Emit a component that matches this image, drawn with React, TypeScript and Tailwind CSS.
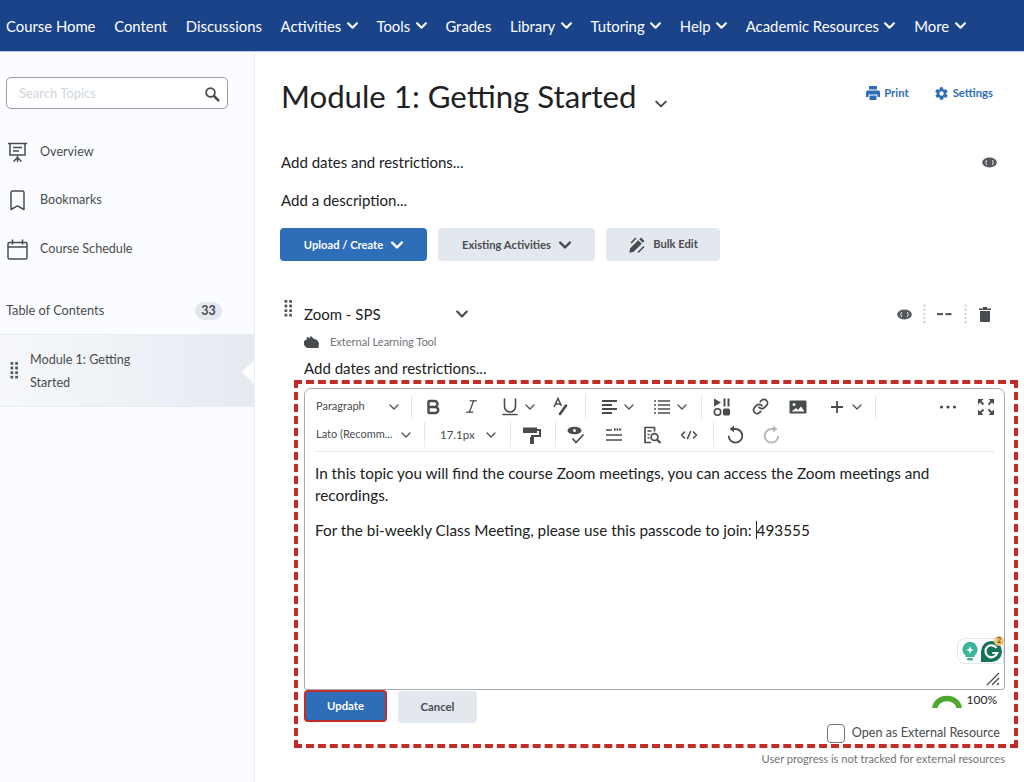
import { Bold, Italic, Link } from "lucide-react";

const navItems = [
  { label: "Course Home" },
  { label: "Content" },
  { label: "Discussions" },
  { label: "Activities", menu: true },
  { label: "Tools", menu: true },
  { label: "Grades" },
  { label: "Library", menu: true },
  { label: "Tutoring", menu: true },
  { label: "Help", menu: true },
  { label: "Academic Resources", menu: true },
  { label: "More", menu: true },
];

const Chevron = ({ className = "", size = 10, stroke = 1.2 }: { className?: string; size?: number; stroke?: number }) => (
  <svg width={size} height={size} viewBox="0 0 10 10" fill="none" stroke="currentColor" strokeWidth={stroke} strokeLinecap="round" strokeLinejoin="round" className={`shrink-0 ${className}`}>
    <path d="M1 3l4 4 4-4" />
  </svg>
);

const Dots = ({ className = "" }: { className?: string }) => (
  <svg width="9" height="17" viewBox="0 0 9 17" fill="#55585c" className={className}>
    {[0, 4.6, 9.2, 13.8].map((y) => (
      <g key={y}>
        <rect x="0.5" y={y} width="2.8" height="2.8" rx="0.6" />
        <rect x="5.2" y={y} width="2.8" height="2.8" rx="0.6" />
      </g>
    ))}
  </svg>
);

const Eye = ({ className = "" }: { className?: string }) => (
  <svg width="15" height="11" viewBox="0 0 15 11" className={className}>
    <ellipse cx="7.5" cy="5.5" rx="7.3" ry="5" fill="#55585c" />
    <path d="M4.6 3.2c-.9 1.4-.9 3.2 0 4.6M10.4 3.2c.9 1.4.9 3.2 0 4.6" stroke="#fff" strokeWidth="1" fill="none" />
  </svg>
);

const Sep = ({ className = "" }: { className?: string }) => <div className={`h-[25px] w-px shrink-0 bg-[#e3e8ef] ${className}`} />;

const Ic = ({ className = "", children }: { className?: string; children: React.ReactNode }) => (
  <svg width="20" height="20" viewBox="0 0 20 20" fill="none" className={`shrink-0 text-[#494c4e] ${className}`}>
    {children}
  </svg>
);

const VDots = () => (
  <svg width="3" height="20" viewBox="0 0 3 20" fill="#cdd5dc" className="shrink-0">
    {[1.5, 5.7, 9.9, 14.1, 18.3].map((y) => (
      <circle key={y} cx="1.5" cy={y} r="1.2" />
    ))}
  </svg>
);

const Sidebar = () => (
  <aside className="w-[255px] shrink-0 border-r border-[#e9edf3] bg-[#fbfcff] pt-[25px]">
    <div className="ml-[6px] flex h-[32px] w-[222px] items-center justify-between rounded-[5px] border border-[#9a9da1] bg-white pl-[12px] pr-[7px]">
      <span className="pt-[1px] text-[13px] text-[#cfd5dc]">Search Topics</span>
      <svg width="16" height="16" viewBox="0 0 16 16" fill="none" stroke="#494c4e" className="mt-[1px]">
        <circle cx="6.5" cy="6.5" r="4.4" strokeWidth="1.7" />
        <path d="M10 10l4.3 4.3" strokeWidth="2.6" strokeLinecap="round" />
      </svg>
    </div>

    <div className="mt-[19px] flex h-[48px] items-center text-[12.6px] text-[#494c4e]">
      <div className="flex w-[40px] justify-center pr-[6px]">
        <svg width="21" height="21" viewBox="0 0 21 21" fill="none" stroke="#494c4e" strokeWidth="1.5">
          <path d="M1 1.5h19M3 1.5v11.5h15V1.500M6 5.500h9M6 9h6" />
          <path d="M10.500 13v7M10.500 15.500l-4 4M10.500 15.500l4 4" />
        </svg>
      </div>
      Overview
    </div>
    <div className="flex h-[49px] items-center text-[12.6px] text-[#494c4e]">
      <div className="flex w-[40px] justify-center pr-[6px]">
        <svg width="15" height="21" viewBox="0 0 15 21" fill="none" stroke="#494c4e" strokeWidth="1.5" strokeLinejoin="round">
          <path d="M2.500 1h10a1.500 1.500 0 011.500 1.500V19.500l-6.500-3.600L1 19.500V2.500A1.500 1.500 0 012.500 1z" />
        </svg>
      </div>
      Bookmarks
    </div>
    <div className="flex h-[48px] items-center text-[12.6px] text-[#494c4e]">
      <div className="flex w-[40px] justify-center pr-[6px]">
        <svg width="21" height="21" viewBox="0 0 21 21" fill="none" stroke="#494c4e" strokeWidth="1.5">
          <rect x="1" y="3.5" width="19" height="16.5" rx="1.5" />
          <path d="M1 8h19M5.500 0.500v5M15.500 0.500v5" />
        </svg>
      </div>
      Course Schedule
    </div>

    <div className="mt-[26px] flex h-[24px] items-center justify-between pl-[6px] pr-[32px] text-[12.75px] text-[#494c4e]">
      Table of Contents
      <span className="flex h-[18px] w-[27px] items-center justify-center rounded-full bg-[#e3e8ef] text-[12.5px] font-bold">33</span>
    </div>

    <div className="relative mt-[11px] flex h-[73px] items-center border-y border-[#e9edf3] bg-gradient-to-r from-[#f6f8fb] to-[#e6eaf1] text-[12.6px] leading-[23px] text-[#494c4e]">
      <Dots className="ml-[10px] shrink-0" />
      <div className="ml-[11px] w-[120px]">Module 1: Getting Started</div>
      <div className="absolute right-0 top-[25px] h-0 w-0 border-y-[12px] border-r-[12px] border-y-transparent border-r-white" />
    </div>
  </aside>
);

const ToolbarRows = () => (
  <div className="mx-[10px] border-b border-[#e3e8ef] pb-[3px] pt-[4px] text-[#494c4e]">
    <div className="flex h-[27px] items-center pl-[1px]">
      <div className="flex w-[83px] items-center justify-between text-[11px]">
        Paragraph
        <Chevron />
      </div>
      <Sep className="ml-[12px]" />
      <div className="ml-[11px] flex w-[20px] shrink-0 justify-center">
        <Bold size={18} strokeWidth={3.2} />
      </div>
      <div className="ml-[18px] flex w-[20px] shrink-0 justify-center">
        <Italic size={17} strokeWidth={1.8} />
      </div>
      <Ic className="ml-[19px]">
        <path d="M4.500 2v7.500a5.500 5.500 0 0011 0V2M3 17.500h14" stroke="#494c4e" strokeWidth="1.600" strokeLinecap="round" />
      </Ic>
      <Chevron className="ml-[5px]" />
      <Ic className="ml-[17px]">
        <path d="M2 10L6 1.500 9.500 9M3.500 7h5" stroke="#494c4e" strokeWidth="1.500" />
        <path d="M8 17l6-8.500" stroke="#494c4e" strokeWidth="2.600" strokeLinecap="round" />
      </Ic>
      <Sep className="ml-[13px]" />
      <Ic className="ml-[14px]">
        <path d="M2 4h15M2 8h10M2 12h15M2 16h10" stroke="#494c4e" strokeWidth="1.800" />
      </Ic>
      <Chevron className="ml-[4px]" />
      <Ic className="ml-[18px]">
        <path d="M6 4h12M6 8h12M6 12h12M6 16h12" stroke="#494c4e" strokeWidth="1.600" />
        <path d="M2 4h2M2 8h2M2 12h2M2 16h2" stroke="#494c4e" strokeWidth="1.600" />
      </Ic>
      <Chevron className="ml-[5px]" />
      <Sep className="ml-[14px]" />
      <Ic className="ml-[10px]">
        <path d="M2 1.500l7 4-7 4z" fill="#494c4e" />
        <path d="M12.500 1.500v8M16.500 1.500v8" stroke="#494c4e" strokeWidth="2" />
        <circle cx="5.500" cy="15" r="3.200" stroke="#494c4e" strokeWidth="1.600" />
        <rect x="11" y="11.500" width="7" height="7" rx="1.500" fill="#494c4e" />
      </Ic>
      <div className="ml-[18px] flex w-[20px] shrink-0 justify-center">
        <Link size={17} strokeWidth={2.4} />
      </div>
      <Ic className="ml-[18px]">
        <path fillRule="evenodd" clipRule="evenodd" d="M2.500 3.500h15a1 1 0 011 1v11a1 1 0 01-1 1h-15a1 1 0 01-1-1v-11a1 1 0 011-1zM3.500 14.500h13l-3.500-5-3 3.500-2-2z M6 6a1.500 1.500 0 100 3 1.500 1.500 0 000-3z" fill="#494c4e" />
      </Ic>
      <Ic className="ml-[19px]">
        <path d="M10 4v12M4 10h12" stroke="#494c4e" strokeWidth="1.800" />
      </Ic>
      <Chevron className="ml-[5px]" />
      <Sep className="ml-[13px]" />
      <Ic className="ml-auto">
        <circle cx="3.500" cy="10" r="1.600" fill="#494c4e" />
        <circle cx="10" cy="10" r="1.600" fill="#494c4e" />
        <circle cx="16.500" cy="10" r="1.600" fill="#494c4e" />
      </Ic>
      <Ic className="ml-[18px] -mr-[2px]">
        <path d="M2 2h5.500L2 7.500zM18 2h-5.500L18 7.500zM2 18h5.500L2 12.500zM18 18h-5.500l5.500-5.500z" fill="#494c4e" />
        <path d="M4 4l3.500 3.500M16 4l-3.500 3.500M4 16l3.500-3.500M16 16l-3.500-3.500" stroke="#494c4e" strokeWidth="1.800" />
      </Ic>
    </div>
    <div className="mt-[1px] flex h-[27px] items-center pl-[1px]">
      <div className="flex w-[95px] items-center justify-between text-[11px]">
        Lato (Recomm...
        <Chevron />
      </div>
      <Sep className="ml-[13px]" />
      <span className="ml-[15px] w-[33px] text-[11.5px]">17.1px</span>
      <Chevron className="ml-[13px]" />
      <Sep className="ml-[14px]" />
      <Ic className="ml-[10px]">
        <path d="M2 2.500h14v5.500H2z" fill="#494c4e" />
        <path d="M16 5h3v6h-8v7" stroke="#494c4e" strokeWidth="2" />
        <rect x="9" y="12" width="4" height="7" fill="#494c4e" />
      </Ic>
      <Sep className="ml-[14px]" />
      <Ic className="ml-[10px]">
        <ellipse cx="8.500" cy="5.500" rx="7" ry="3.800" fill="#494c4e" />
        <circle cx="8.500" cy="5.500" r="1.500" fill="#fff" />
        <path d="M6.500 13.500l3.500 4 7.500-8" stroke="#494c4e" strokeWidth="1.700" />
      </Ic>
      <Ic className="ml-[18px]">
        <path d="M2 10h16M2 15h16M2 5h6" stroke="#494c4e" strokeWidth="1.600" />
        <path d="M10 4.500h8" stroke="#494c4e" strokeWidth="2.400" strokeDasharray="1.600 1" />
      </Ic>
      <Ic className="ml-[18px]">
        <path d="M9 17.500H3V2.500h9.500v4" stroke="#494c4e" strokeWidth="1.700" />
        <path d="M5.500 6h4M5.500 9.500h2M5.500 13h2" stroke="#494c4e" strokeWidth="1.400" />
        <circle cx="12.500" cy="12" r="3.400" stroke="#494c4e" strokeWidth="1.700" />
        <path d="M15 14.500l3.500 3.500" stroke="#494c4e" strokeWidth="2.200" />
      </Ic>
      <Ic className="ml-[17px]">
        <path d="M5.500 7L2.500 10l3 3M14.500 7l3 3-3 3M11.500 6.500L8.500 13.500" stroke="#494c4e" strokeWidth="1.600" strokeLinecap="round" strokeLinejoin="round" />
      </Ic>
      <Sep className="ml-[14px]" />
      <Ic className="ml-[11px]">
        <path d="M8 4h2.500a6.800 6.800 0 11-6.800 6.800" stroke="#494c4e" strokeWidth="1.800" />
        <path d="M9 .8L4.500 4 9 7.200z" fill="#494c4e" />
      </Ic>
      <Ic className="ml-[17px]">
        <path d="M12 4H9.500a6.800 6.800 0 106.800 6.800" stroke="#b5b8bb" strokeWidth="1.800" />
        <path d="M11 .8L15.500 4 11 7.200z" fill="#b5b8bb" />
      </Ic>
    </div>
  </div>
);

const Editor = () => (
  <div className="relative h-[302px] w-[701px] rounded-t-[7px] rounded-b-[3px] border border-[#a8abae] bg-white">
    <ToolbarRows />
    <div className="px-[10px] pt-[10px] text-[15.3px] leading-[22px] text-[#202122]">
      <p>In this topic you will find the course Zoom meetings, you can access the Zoom meetings and recordings.</p>
      <p className="mt-[13px]">
        For the bi-weekly Class Meeting, please use this passcode to join:{" "}
        <span className="border-l border-[#202122]">493555</span>
      </p>
    </div>
    <div className="absolute right-0 top-[249px] flex h-[26px] w-[47px] items-center justify-end gap-[3px] rounded-l-[8px] border border-[#e3e8ef] bg-white pr-[1px]">
      <svg width="16" height="19" viewBox="0 0 16 19">
        <path d="M8 0a7.500 7.500 0 00-4.500 13.500V15h9v-1.500A7.500 7.500 0 008 0z" fill="#3bb39a" />
        <rect x="5" y="16" width="6" height="2.500" rx="1" fill="#3bb39a" />
        <path d="M8 4l1 3 3 1-3 1-1 3-1-3-3-1 3-1z" fill="#fff" />
      </svg>
      <div className="relative">
        <svg width="21" height="21" viewBox="0 0 21 21">
          <path d="M10.500 0a10.500 10.500 0 110 21H0V10.500A10.500 10.500 0 0110.500 0z" fill="#15715b" />
          <path d="M15.500 7a6 6 0 10.700 5h-5" fill="none" stroke="#fff" strokeWidth="2.200" />
        </svg>
        <span className="absolute -right-[2px] -top-[5px] flex h-[10px] w-[10px] items-center justify-center rounded-full bg-[#f2c374] text-[7px] font-bold text-[#5c4a1f]">2</span>
      </div>
    </div>
    <svg width="14" height="14" viewBox="0 0 14 14" stroke="#494c4e" strokeWidth="1.300" className="absolute bottom-[3px] right-[4px]">
      <path d="M1 13L13 1M6 13l7-7M11 13l2-2" />
    </svg>
  </div>
);

const Main = () => (
  <main className="min-w-0 flex-1 bg-white pt-[24px]">
    <div className="flex h-[41px] items-start pl-[26px] pr-[31px]">
      <h1 className="text-[31.2px] leading-[40px] text-[#202122]">Module 1: Getting Started</h1>
      <Chevron size={12} stroke={1.7} className="ml-[18px] mt-[22px] text-[#494c4e]" />
      <div className="ml-auto mt-[9px] flex items-center text-[11.3px] font-bold text-[#2e6db8]">
        <svg width="14" height="14" viewBox="0 0 14 14" fill="#2e6db8">
          <path fillRule="evenodd" d="M3 0h8v3.500H3zM1.500 4.500h11A1.500 1.500 0 0114 6v5h-2.500V8.500h-9V11H0V6a1.500 1.500 0 011.500-1.500zM3.500 9.500h7V14h-7z" />
        </svg>
        <span className="ml-[4px]">Print</span>
        <svg width="15" height="15" viewBox="0 0 24 24" fill="#2e6db8" className="ml-[25px]">
          <path d="M19.400 13c.1-.3.1-.7.1-1s0-.7-.1-1l2.100-1.600c.2-.2.2-.4.100-.6l-2-3.500c-.1-.2-.4-.3-.6-.2l-2.500 1c-.5-.4-1.100-.7-1.700-1l-.4-2.600c0-.3-.2-.5-.5-.5h-4c-.3 0-.5.200-.5.500l-.4 2.600c-.6.300-1.200.600-1.700 1l-2.500-1c-.2-.1-.5 0-.6.200l-2 3.500c-.1.200-.1.400.1.600L4.600 11c-.1.300-.1.700-.1 1s0 .7.1 1l-2.100 1.600c-.2.200-.2.400-.1.600l2 3.500c.1.200.4.300.6.200l2.500-1c.5.400 1.100.700 1.700 1l.4 2.600c0 .3.200.5.500.5h4c.3 0 .5-.2.500-.5l.4-2.600c.6-.3 1.200-.6 1.700-1l2.500 1c.2.100.5 0 .6-.2l2-3.500c.1-.2.100-.4-.1-.6zM12 15.500a3.500 3.500 0 110-7 3.500 3.500 0 010 7z" />
        </svg>
        <span className="ml-[4px]">Settings</span>
      </div>
    </div>

    <div className="mt-[34px] flex h-[22px] items-center justify-between pl-[26px] pr-[27px] text-[15px] text-[#202122]">
      Add dates and restrictions...
      <Eye />
    </div>
    <div className="mt-[16px] h-[22px] pl-[26px] text-[15px] leading-[22px] text-[#202122]">Add a description...</div>

    <div className="ml-[25px] mt-[17px] flex gap-[11px] text-[11.2px] font-bold">
      <button className="flex h-[33px] w-[147px] items-center justify-center gap-[8px] rounded-[4px] bg-[#2e6db8] pt-[1px] text-white">
        Upload / Create
        <Chevron size={12} stroke={2} />
      </button>
      <button className="flex h-[33px] w-[157px] items-center justify-center gap-[8px] rounded-[4px] bg-[#e3e8ef] pt-[1px] text-[#494c4e]">
        Existing Activities
        <Chevron size={12} stroke={2} />
      </button>
      <button className="flex h-[33px] w-[114px] items-center justify-center gap-[7px] rounded-[4px] bg-[#e3e8ef] text-[#494c4e]">
        <svg width="18" height="18" viewBox="0 0 18 18" fill="#494c4e">
          <path d="M13 1.500l3.500 3.500-1.800 1.800-3.500-3.500zM10.200 4.300l3.500 3.500-8 8-4.500 1 1-4.500z" />
          <path d="M3 7l5-5M10 16.500l6-6" stroke="#494c4e" strokeWidth="1.600" />
        </svg>
        Bulk Edit
      </button>
    </div>

    <div className="mt-[42px] flex h-[22px] items-center pl-[29px] pr-[33px] text-[15px] text-[#202122]">
      <Dots className="-mt-[12px] shrink-0" />
      <span className="ml-[11px] w-[152px]">Zoom - SPS</span>
      <Chevron size={12} stroke={1.8} className="text-[#494c4e]" />
      <div className="ml-auto flex items-center">
        <Eye />
        <div className="ml-[11px]"><VDots /></div>
        <span className="ml-[11px] text-[#494c4e]">
          <svg width="15" height="3" viewBox="0 0 15 3" fill="#55585c">
            <rect width="6" height="2.200" />
            <rect x="8.500" width="6" height="2.200" />
          </svg>
        </span>
        <div className="ml-[12px]"><VDots /></div>
        <svg width="12" height="15" viewBox="0 0 12 15" fill="#494c4e" className="ml-[12px]">
          <path d="M4 0h4v1.500h4v1.500H0V1.500h4zM1 4h10v10a1 1 0 01-1 1H2a1 1 0 01-1-1z" />
        </svg>
      </div>
    </div>
    <div className="ml-[49px] mt-[9px] flex h-[16px] items-center text-[11px] text-[#6e7477]">
      <svg width="15" height="12" viewBox="0 0 15 12" fill="#494c4e">
        <path d="M0 5l2.500-1.500L3 1l2.500 1L7 0l2.500 2.500L13 4l2 3-.5 5H3L0 9z" />
      </svg>
      <span className="ml-[11px]">External Learning Tool</span>
    </div>
    <div className="mt-[7px] h-[22px] pl-[49px] text-[15px] leading-[22px] text-[#202122]">Add dates and restrictions...</div>

    <div className="ml-[39px] mr-[6px] mt-[1px] h-[368px] border-[4px] border-dashed border-[#c22d27] pl-[6px] pt-[4px]">
      <Editor />
      <div className="flex items-start text-[11.3px] font-bold">
        <button className="h-[32px] w-[83px] rounded-[4px] border-2 border-[#c22d27] bg-[#2e6db8] text-white">Update</button>
        <button className="ml-[11px] mt-[1px] h-[32px] w-[79px] rounded-[4px] bg-[#e3e8ef] text-[#494c4e]">Cancel</button>
        <div className="ml-auto mr-[17px] mt-[3px] flex items-start font-normal">
          <svg width="30" height="15" viewBox="0 0 30 15" fill="none" className="mr-[5px]">
            <path d="M3 15a12 9.500 0 0124 0" stroke="#4ca72c" strokeWidth="5.500" />
          </svg>
          <span className="-mt-[1px] text-[12px] leading-[16px] text-[#202122]">100%</span>
        </div>
      </div>
      <div className="mt-[1px] flex h-[19px] items-center justify-end pr-[14px] text-[12.6px] text-[#494c4e]">
        <span className="h-[19px] w-[18px] rounded-[4px] border border-[#6e7477] bg-white" />
        <span className="ml-[7px]">Open as External Resource</span>
      </div>
    </div>
    <div className="mr-[19px] mt-[3px] text-right text-[11.1px] leading-[16px] text-[#6e7477]">User progress is not tracked for external resources</div>
  </main>
);

export default function App() {
  return (
    <div className="flex h-[782px] w-[1024px] flex-col overflow-hidden bg-white font-['Lato',sans-serif]">
      <header className="flex h-[52px] shrink-0 items-center gap-[18.7px] border-b border-[#b9cbe6] bg-[#1a4389] pl-[6px] pt-[1px] text-[14.85px] text-white">
        {navItems.map((item) => (
          <div key={item.label} className="flex items-center gap-[5.5px]">
            {item.label}
            {item.menu && <Chevron size={11} stroke={2} />}
          </div>
        ))}
      </header>
      <div className="flex min-h-0 flex-1">
        <Sidebar />
        <Main />
      </div>
    </div>
  );
}
